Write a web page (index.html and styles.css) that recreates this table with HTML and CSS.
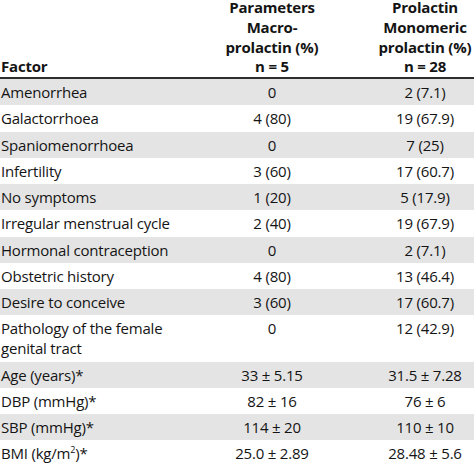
FILE: index.html
```html
<!DOCTYPE html>
<html>
<head>
<meta charset="utf-8">
<link rel="stylesheet" href="styles.css">
</head>
<body>
<table class="data">
  <colgroup>
    <col class="c1"><col class="c2"><col class="c3">
  </colgroup>
  <thead>
    <tr>
      <th class="factor">Factor</th>
      <th class="num">Parameters<br>Macro-<br>prolactin (%)<br>n = 5</th>
      <th class="num last">Prolactin<br>Monomeric<br>prolactin (%)<br>n = 28</th>
    </tr>
  </thead>
  <tbody>
    <tr class="g"><td>Amenorrhea</td><td class="num">0</td><td class="num last">2 (7.1)</td></tr>
    <tr><td>Galactorrhoea</td><td class="num">4 (80)</td><td class="num last">19 (67.9)</td></tr>
    <tr class="g"><td>Spaniomenorrhoea</td><td class="num">0</td><td class="num last">7 (25)</td></tr>
    <tr><td>Infertility</td><td class="num">3 (60)</td><td class="num last">17 (60.7)</td></tr>
    <tr class="g"><td>No symptoms</td><td class="num">1 (20)</td><td class="num last">5 (17.9)</td></tr>
    <tr><td>Irregular menstrual cycle</td><td class="num">2 (40)</td><td class="num last">19 (67.9)</td></tr>
    <tr class="g"><td>Hormonal contraception</td><td class="num">0</td><td class="num last">2 (7.1)</td></tr>
    <tr><td>Obstetric history</td><td class="num">4 (80)</td><td class="num last">13 (46.4)</td></tr>
    <tr class="g"><td>Desire to conceive</td><td class="num">3 (60)</td><td class="num last">17 (60.7)</td></tr>
    <tr><td>Pathology of the female genital tract</td><td class="num">0</td><td class="num last">12 (42.9)</td></tr>
    <tr class="g"><td>Age (years)*</td><td class="num">33 ± 5.15</td><td class="num last">31.5 ± 7.28</td></tr>
    <tr><td>DBP (mmHg)*</td><td class="num">82 ± 16</td><td class="num last">76 ± 6</td></tr>
    <tr class="g"><td>SBP (mmHg)*</td><td class="num">114 ± 20</td><td class="num last">110 ± 10</td></tr>
    <tr><td>BMI (kg/m<sup>2</sup>)*</td><td class="num">25.0 ± 2.89</td><td class="num last">28.48 ± 5.6</td></tr>
  </tbody>
</table>
</body>
</html>
```
FILE: styles.css
```css
html, body {
  margin: 0;
  padding: 0;
  background: #ffffff;
}
body {
  overflow: hidden;
  font-family: "Open Sans", "DejaVu Sans", sans-serif;
  font-size: 15px;
  letter-spacing: -0.2px;
  color: #141414;
}
.data {
  width: 474px;
  margin-top: -2px;
  border-collapse: collapse;
  table-layout: fixed;
}
.c1 { width: 176px; }
.c2 { width: 192px; }
.c3 { width: 106px; }
.data th {
  font-weight: 700;
  line-height: 19.75px;
  padding: 0;
  vertical-align: bottom;
  border-bottom: 2px solid #2e2e2e;
}
.data th.factor {
  text-align: left;
  padding-left: 1px;
}
.data td {
  line-height: 20px;
  padding: 3px 0 3.25px 1px;
  vertical-align: top;
}
.data .num {
  text-align: center;
  padding-left: 0;
}
.data .last {
  padding-left: 8px;
  white-space: nowrap;
}
.data tr.g td {
  background: #e4e4e4;
}
sup {
  font-size: 9px;
  line-height: 0;
  vertical-align: 6px;
}
```
